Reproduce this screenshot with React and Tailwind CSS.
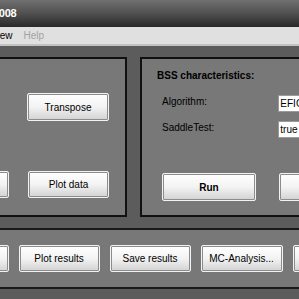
const font = { fontFamily: '"Liberation Sans", Arial, sans-serif' };

function Btn({ children, className = '', bold = false }) {
  return (
    <div
      className={`shrink-0 flex items-center justify-center rounded-[2px] border border-[#f2f2f2] bg-gradient-to-b from-[#ffffff] via-[#f3f3f3] to-[#d2d2d2] shadow-[inset_0_0_0_1px_#8c8c8c] text-[10px] text-black ${
        bold ? 'font-bold' : ''
      } ${className}`}
    >
      {children}
    </div>
  );
}

export default function App() {
  return (
    <div className="w-[299px] h-[299px] overflow-hidden bg-[#5c5c5c] flex flex-col" style={font}>
      {/* title bar */}
      <div className="h-[27px] shrink-0 bg-gradient-to-b from-[#707070] via-[#505050] to-[#2a2a2a] flex items-center">
        <span className="ml-[-7px] text-white font-bold text-[11px] tracking-tight">2008</span>
      </div>

      {/* menu bar */}
      <div className="h-[19px] shrink-0 bg-[#e0e0e0] border-b-2 border-[#c2c2c2] flex items-center text-[10px]">
        <span className="ml-[-9px] text-black">View</span>
        <span className="ml-[11px] text-[#a2a2a2]">Help</span>
      </div>

      {/* panels */}
      <div className="flex gap-[13px] mt-[11px] ml-[-20px]">
        <div className="w-[147px] h-[160px] shrink-0 bg-[#787878] border-2 border-[#111] flex flex-col">
          <Btn className="ml-[45px] mt-[34px] w-[82px] h-[28px]">Transpose</Btn>
          <div className="flex justify-end gap-[19px] pr-[16px] mt-[50px]">
            <Btn className="w-[82px] h-[27px]">Load data</Btn>
            <Btn className="w-[81px] h-[27px]">Plot data</Btn>
          </div>
        </div>

        <div className="w-[200px] h-[160px] shrink-0 bg-[#787878] border-2 border-[#111] flex flex-col pl-[15px]">
          <div className="mt-[9px] font-bold text-[10px] text-black">BSS characteristics:</div>
          <div className="flex flex-col gap-[9px] mt-[12px] pl-[5px]">
            <div className="flex items-start">
              <span className="w-[117px] mt-[-1px] text-[10px] text-black">Algorithm:</span>
              <div className="w-[60px] h-[17px] bg-white border border-[#9a9a9a] flex items-center pl-[1px] text-[10px] text-black">
                EFICA
              </div>
            </div>
            <div className="flex items-start">
              <span className="w-[117px] mt-[-1px] text-[10px] text-black">SaddleTest:</span>
              <div className="w-[60px] h-[17px] bg-white border border-[#9a9a9a] flex items-center pl-[1px] text-[10px] text-black">
                true
              </div>
            </div>
          </div>
          <div className="flex gap-[23px] pl-[5px] mt-[35px]">
            <Btn bold className="w-[94px] h-[28px]">Run</Btn>
            <Btn bold className="w-[94px] h-[28px]">Stop</Btn>
          </div>
        </div>
      </div>

      {/* bottom panel */}
      <div className="mt-[11px] h-[61px] shrink-0 bg-[#787878] border-y-2 border-[#1a1a1a] flex justify-center items-center pl-[2px]">
        <div className="flex gap-[10px] shrink-0">
          <Btn className="w-[81px] h-[27px]">Clear</Btn>
          <Btn className="w-[81px] h-[27px]">Plot results</Btn>
          <Btn className="w-[81px] h-[27px]">Save results</Btn>
          <Btn className="w-[82px] h-[27px]">MC-Analysis...</Btn>
          <Btn className="w-[81px] h-[27px]">Close</Btn>
        </div>
      </div>
    </div>
  );
}
